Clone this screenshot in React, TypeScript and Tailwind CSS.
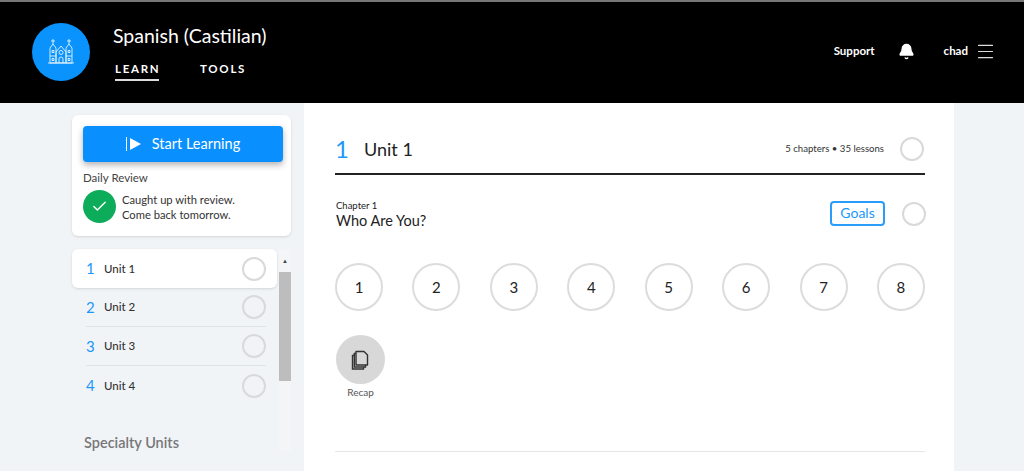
import { Bell, Check, Menu } from 'lucide-react';

const FONT = "font-['Lato','Noto_Sans',sans-serif]";

const UNITS = [1, 2, 3, 4];
const LESSONS = [1, 2, 3, 4, 5, 6, 7, 8];

function Ring({ className = '' }: { className?: string }) {
  return <div className={`w-6 h-6 shrink-0 rounded-full border-2 border-[#d9d9d9] ${className}`} />;
}

function Church() {
  return (
    <svg width="28" height="28" viewBox="0 0 28 28" fill="none" stroke="#fff" strokeWidth="0.9" className="opacity-90">
      <path d="M6 1v5M4 3h4M22 1v5M20 3h4" />
      <path d="M6 6l-3 4v15h6V10zM22 6l-3 4v15h6V10z" />
      <path d="M9 14l5-6 5 6v11H9z" />
      <circle cx="14" cy="14.500" r="2" />
      <path d="M12 25v-4a2 2 0 0 1 4 0v4M1 25h26M3 18h6M19 18h6" />
      <path d="M5 12.500h2v2H5zM21 12.500h2v2h-2zM5 20.500h2v2H5zM21 20.500h2v2h-2z" />
    </svg>
  );
}

function Pages() {
  return (
    <svg width="22" height="22" viewBox="0 0 22 22" fill="none" stroke="#333" strokeWidth="1.400">
      <path d="M6 2.500h8l3.500 3.500v10H6z" strokeLinejoin="round" />
      <path d="M6 4.500H4.300v13.500h11.200v-2" />
      <path d="M4.300 6.500H2.500v13.500h11v-2" />
    </svg>
  );
}

export default function App() {
  return (
    <div className={`h-[471px] overflow-hidden bg-[#f1f4f7] text-[#222] ${FONT}`}>
      <header className="h-[103px] bg-black border-t-2 border-[#777] flex items-center pl-[32px] pr-[28px] text-white">
        <div className="w-[58px] h-[58px] rounded-full bg-[#0a93fd] flex items-center justify-center -mt-[1px]">
          <Church />
        </div>
        <div className="ml-[23px] flex flex-col self-start">
          <h1 className="text-[19.500px] leading-6 mt-[22px]">Spanish (Castilian)</h1>
          <nav className="flex gap-[41px] mt-[8px] pl-[2px] pt-[1px] text-[11.500px] font-bold tracking-[0.15em]">
            <span className="border-b-2 border-[#ddd] pt-[3px] pb-[2px] w-[44px] whitespace-nowrap">LEARN</span>
            <span className="pt-[3px]">TOOLS</span>
          </nav>
        </div>
        <div className="ml-auto flex items-center text-[11.500px] font-bold -mt-[4px]">
          <span>Support</span>
          <Bell size={17} fill="#fff" className="ml-[23px] mt-[2px]" />
          <span className="ml-[29px]">chad</span>
          <Menu size={21} strokeWidth={1.300} className="ml-[7px] mt-[1px] text-[#ddd]" />
        </div>
      </header>

      <div className="flex pl-[72px]">
        <aside className="w-[219px] pt-[12px]">
          <div className="bg-white rounded-md h-[121px] px-[11px] pt-[11px] shadow-sm">
            <button className="w-[200px] h-[36px] rounded-[4px] bg-[#0a8fff] text-white text-[14.500px] flex items-center justify-center gap-[10px] shadow-[0_3px_6px_rgba(0,0,0,0.3)]">
              <svg width="16" height="14" viewBox="0 0 16 14" fill="#fff">
                <rect x="0" y="0" width="1" height="14" />
                <path d="M4 1l11 6-11 6z" />
              </svg>
              Start Learning
            </button>
            <p className="text-[11.500px] leading-4 text-[#444] mt-[8px]">Daily Review</p>
            <div className="flex items-center gap-[6px] mt-[4px]">
              <div className="w-[33px] h-[33px] rounded-full bg-[#0cac5a] flex items-center justify-center">
                <Check size={17} strokeWidth={2} className="text-white" />
              </div>
              <p className="text-[11.200px] leading-[15px] text-[#333]">
                Caught up with review.
                <br />
                Come back tomorrow.
              </p>
            </div>
          </div>

          <div className="flex mt-[13px] h-[202px]">
            <ul className="w-[205px]">
              {UNITS.map(n => (
                <li
                  key={n}
                  className={`h-[39px] flex items-center pl-[14px] pr-[11px] ${
                    n === 1 ? 'bg-white rounded-md shadow-sm' : ''
                  }`}
                >
                  <div className={`flex-1 flex items-center h-full ${n === 3 || n === 2 ? 'border-b border-[#e0e2e6]' : ''}`}>
                    <span className="w-[18px] text-[15px] text-[#1c97fb]">{n}</span>
                    <span className="text-[11.500px] font-medium text-[#333]">Unit {n}</span>
                    <Ring className="ml-auto" />
                  </div>
                </li>
              ))}
              <li className="pl-[12px] pt-[27px] text-[14.500px] font-semibold text-[#777]">Specialty Units</li>
            </ul>
            <div className="w-[12px] ml-[2px] bg-[#f4f5f7] flex flex-col">
              <div className="h-[23px] flex items-center justify-center text-[6px] text-[#444]">▲</div>
              <div className="h-[109px] bg-[#bdbdbd]" />
            </div>
          </div>
        </aside>

        <main className="w-[650px] h-[368px] ml-[13px] bg-white pl-[31px] pr-[29px]">
          <div className="h-[72px] flex items-center border-b-2 border-[#222] pt-[22px]">
            <span className="w-[29px] text-[24px] text-[#1c97fb]">1</span>
            <h2 className="text-[18px]">Unit 1</h2>
            <span className="ml-auto text-[9.600px] text-[#333]">5 chapters • 35 lessons</span>
            <Ring className="ml-[16px] mr-[1px]" />
          </div>

          <div className="flex items-start mt-[26px] pl-[1px] h-[30px]">
            <div>
              <p className="text-[9.500px] leading-[11px] mt-[-1px]">Chapter 1</p>
              <h3 className="text-[14.500px] leading-[18px] mt-[1px]">Who Are You?</h3>
            </div>
            <span className="ml-auto w-[55px] h-[25px] pb-[2px] rounded-[4px] border-2 border-[#2a9dfb] text-[#1c97fb] text-[14px] flex items-center justify-center">
              Goals
            </span>
            <Ring className="ml-[17px] -mr-[1px] mt-[1px]" />
          </div>

          <div className="flex justify-between mt-[32px]">
            {LESSONS.map(n => (
              <div
                key={n}
                className="w-[48px] h-[48px] rounded-full border-2 border-[#dcdcdc] flex items-center justify-center text-[15px]"
              >
                {n}
              </div>
            ))}
          </div>

          <div className="w-[49px] ml-[1px] mt-[24px] flex flex-col items-center">
            <div className="w-[49px] h-[49px] rounded-full bg-[#d8d8d8] flex items-center justify-center">
              <Pages />
            </div>
            <span className="text-[10px] text-[#555] mt-[1px]">Recap</span>
          </div>

          <div className="border-t border-[#e6e6e6] mt-[51px]" />
        </main>
      </div>
    </div>
  );
}
